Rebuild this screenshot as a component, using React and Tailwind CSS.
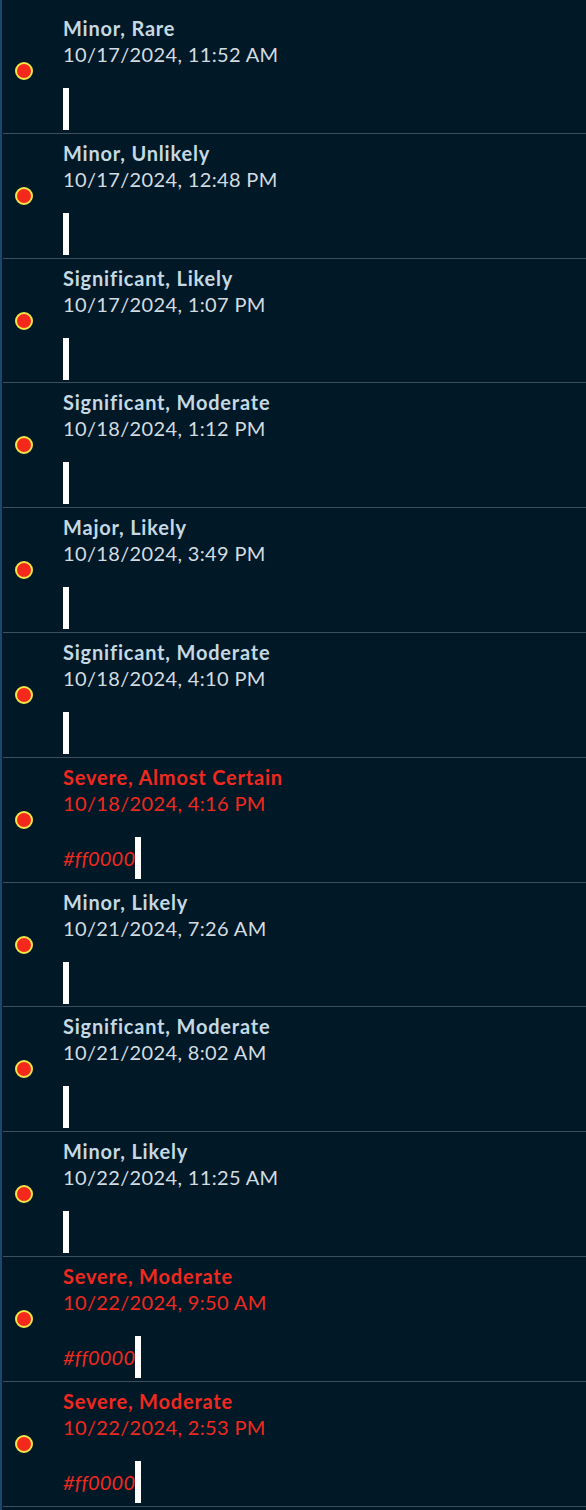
const entries = [
  { title: "Minor, Rare", date: "10/17/2024, 11:52 AM" },
  { title: "Minor, Unlikely", date: "10/17/2024, 12:48 PM" },
  { title: "Significant, Likely", date: "10/17/2024, 1:07 PM" },
  { title: "Significant, Moderate", date: "10/18/2024, 1:12 PM" },
  { title: "Major, Likely", date: "10/18/2024, 3:49 PM" },
  { title: "Significant, Moderate", date: "10/18/2024, 4:10 PM" },
  { title: "Severe, Almost Certain", date: "10/18/2024, 4:16 PM", color: "#ff0000" },
  { title: "Minor, Likely", date: "10/21/2024, 7:26 AM" },
  { title: "Significant, Moderate", date: "10/21/2024, 8:02 AM" },
  { title: "Minor, Likely", date: "10/22/2024, 11:25 AM" },
  { title: "Severe, Moderate", date: "10/22/2024, 9:50 AM", color: "#ff0000" },
  { title: "Severe, Moderate", date: "10/22/2024, 2:53 PM", color: "#ff0000" },
];

function Row({ entry }) {
  const severe = !!entry.color;
  return (
    <div className="relative h-[124.8px] border-b border-[#3b4f5d] pl-[60px] pt-[6px]">
      <span className="absolute left-[12px] top-[53px] h-[18px] w-[18px] rounded-full border-2 border-[#f2e64a] bg-[#f5281c]" />
      <div className={`text-[20px] font-bold leading-[26px] tracking-[0.8px] ${severe ? "text-[#f0291f]" : "text-[#c6d8e2]"}`}>
        {entry.title}
      </div>
      <div className={`text-[20px] leading-[26px] tracking-[0.35px] ${severe ? "text-[#f0291f]" : "text-[#d3dce1]"}`}>
        {entry.date}
      </div>
      <div className="mt-[21px] flex h-[42px] items-center">
        {severe && <span className="text-[20px] italic tracking-[0.2px] text-[#f0291f]">{entry.color}</span>}
        <span className="h-[42px] w-[6px] bg-white" />
      </div>
    </div>
  );
}

export default function App() {
  return (
    <div
      className="min-h-[1510px] border-l-2 border-[#1b4670] bg-[#011826] pt-[9px] pl-px"
      style={{ fontFamily: "Lato, 'Noto Sans', sans-serif" }}
    >
      {entries.map((e, i) => (
        <Row key={i} entry={e} />
      ))}
    </div>
  );
}
